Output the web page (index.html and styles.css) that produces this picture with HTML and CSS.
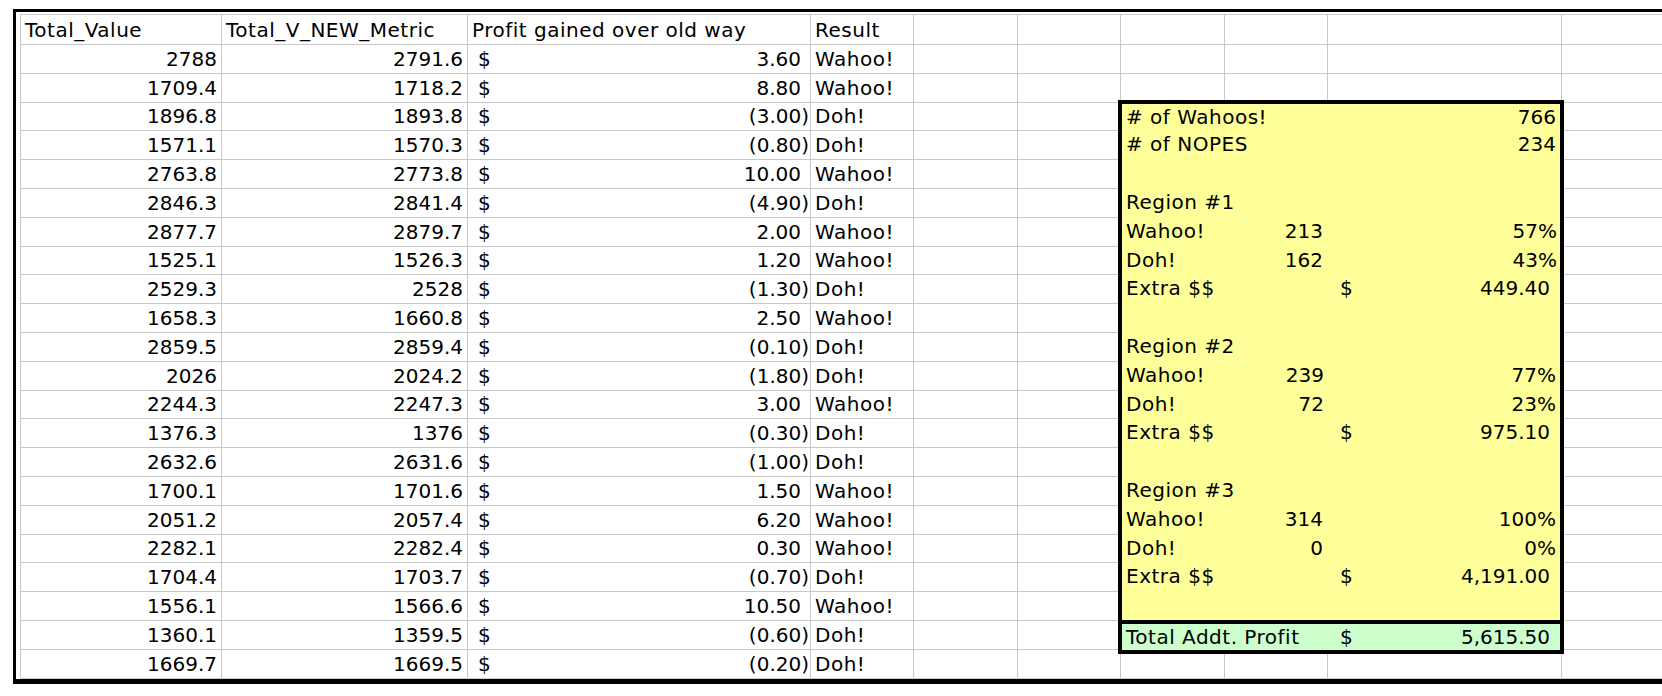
FILE: index.html
```html
<!DOCTYPE html>
<html lang="en">
<head>
<meta charset="utf-8">
<title>Wahoo sheet</title>
<link rel="stylesheet" href="styles.css">
</head>
<body>
<div class="frame">
  <div class="sheet">
    <div class="c">Total_Value</div><div class="c">Total_V_NEW_Metric</div><div class="c">Profit gained over old way</div><div class="c">Result</div><div class="c"></div><div class="c"></div><div class="c"></div><div class="c"></div><div class="c"></div><div class="c"></div>

    <div class="c n">2788</div><div class="c n">2791.6</div><div class="c acc"><span>$</span><span>3.60</span></div><div class="c">Wahoo!</div><div class="c"></div><div class="c"></div><div class="c"></div><div class="c"></div><div class="c"></div><div class="c"></div>
    <div class="c n">1709.4</div><div class="c n">1718.2</div><div class="c acc"><span>$</span><span>8.80</span></div><div class="c">Wahoo!</div><div class="c"></div><div class="c"></div><div class="c"></div><div class="c"></div><div class="c"></div><div class="c"></div>

    <div class="c n">1896.8</div><div class="c n">1893.8</div><div class="c acc neg"><span>$</span><span>(3.00)</span></div><div class="c">Doh!</div><div class="c"></div><div class="c"></div><div class="c"></div>
    <div class="c n">1571.1</div><div class="c n">1570.3</div><div class="c acc neg"><span>$</span><span>(0.80)</span></div><div class="c">Doh!</div><div class="c"></div><div class="c"></div><div class="c"></div>
    <div class="c n">2763.8</div><div class="c n">2773.8</div><div class="c acc"><span>$</span><span>10.00</span></div><div class="c">Wahoo!</div><div class="c"></div><div class="c"></div><div class="c"></div>
    <div class="c n">2846.3</div><div class="c n">2841.4</div><div class="c acc neg"><span>$</span><span>(4.90)</span></div><div class="c">Doh!</div><div class="c"></div><div class="c"></div><div class="c"></div>
    <div class="c n">2877.7</div><div class="c n">2879.7</div><div class="c acc"><span>$</span><span>2.00</span></div><div class="c">Wahoo!</div><div class="c"></div><div class="c"></div><div class="c"></div>
    <div class="c n">1525.1</div><div class="c n">1526.3</div><div class="c acc"><span>$</span><span>1.20</span></div><div class="c">Wahoo!</div><div class="c"></div><div class="c"></div><div class="c"></div>
    <div class="c n">2529.3</div><div class="c n">2528</div><div class="c acc neg"><span>$</span><span>(1.30)</span></div><div class="c">Doh!</div><div class="c"></div><div class="c"></div><div class="c"></div>
    <div class="c n">1658.3</div><div class="c n">1660.8</div><div class="c acc"><span>$</span><span>2.50</span></div><div class="c">Wahoo!</div><div class="c"></div><div class="c"></div><div class="c"></div>
    <div class="c n">2859.5</div><div class="c n">2859.4</div><div class="c acc neg"><span>$</span><span>(0.10)</span></div><div class="c">Doh!</div><div class="c"></div><div class="c"></div><div class="c"></div>
    <div class="c n">2026</div><div class="c n">2024.2</div><div class="c acc neg"><span>$</span><span>(1.80)</span></div><div class="c">Doh!</div><div class="c"></div><div class="c"></div><div class="c"></div>
    <div class="c n">2244.3</div><div class="c n">2247.3</div><div class="c acc"><span>$</span><span>3.00</span></div><div class="c">Wahoo!</div><div class="c"></div><div class="c"></div><div class="c"></div>
    <div class="c n">1376.3</div><div class="c n">1376</div><div class="c acc neg"><span>$</span><span>(0.30)</span></div><div class="c">Doh!</div><div class="c"></div><div class="c"></div><div class="c"></div>
    <div class="c n">2632.6</div><div class="c n">2631.6</div><div class="c acc neg"><span>$</span><span>(1.00)</span></div><div class="c">Doh!</div><div class="c"></div><div class="c"></div><div class="c"></div>
    <div class="c n">1700.1</div><div class="c n">1701.6</div><div class="c acc"><span>$</span><span>1.50</span></div><div class="c">Wahoo!</div><div class="c"></div><div class="c"></div><div class="c"></div>
    <div class="c n">2051.2</div><div class="c n">2057.4</div><div class="c acc"><span>$</span><span>6.20</span></div><div class="c">Wahoo!</div><div class="c"></div><div class="c"></div><div class="c"></div>
    <div class="c n">2282.1</div><div class="c n">2282.4</div><div class="c acc"><span>$</span><span>0.30</span></div><div class="c">Wahoo!</div><div class="c"></div><div class="c"></div><div class="c"></div>
    <div class="c n">1704.4</div><div class="c n">1703.7</div><div class="c acc neg"><span>$</span><span>(0.70)</span></div><div class="c">Doh!</div><div class="c"></div><div class="c"></div><div class="c"></div>
    <div class="c n">1556.1</div><div class="c n">1566.6</div><div class="c acc"><span>$</span><span>10.50</span></div><div class="c">Wahoo!</div><div class="c"></div><div class="c"></div><div class="c"></div>
    <div class="c n">1360.1</div><div class="c n">1359.5</div><div class="c acc neg"><span>$</span><span>(0.60)</span></div><div class="c">Doh!</div><div class="c"></div><div class="c"></div><div class="c"></div>

    <div class="c n">1669.7</div><div class="c n">1669.5</div><div class="c acc neg"><span>$</span><span>(0.20)</span></div><div class="c">Doh!</div><div class="c"></div><div class="c"></div><div class="c"></div><div class="c"></div><div class="c"></div><div class="c"></div>

    <div class="box">
      <div class="yellow">
        <div class="b span2">#&nbsp;of Wahoos!</div><div class="b r">766</div>
        <div class="b span2">#&nbsp;of NOPES</div><div class="b r">234</div>
        <div class="b full"></div>
        <div class="b full">Region #1</div>
        <div class="b">Wahoo!</div><div class="b r">213</div><div class="b r">57%</div>
        <div class="b">Doh!</div><div class="b r">162</div><div class="b r">43%</div>
        <div class="b span2">Extra $$</div><div class="b acc"><span>$</span><span>449.40</span></div>
        <div class="b full"></div>
        <div class="b full">Region #2</div>
        <div class="b">Wahoo!</div><div class="b r">239</div><div class="b r">77%</div>
        <div class="b">Doh!</div><div class="b r">72</div><div class="b r">23%</div>
        <div class="b span2">Extra $$</div><div class="b acc"><span>$</span><span>975.10</span></div>
        <div class="b full"></div>
        <div class="b full">Region #3</div>
        <div class="b">Wahoo!</div><div class="b r">314</div><div class="b r">100%</div>
        <div class="b">Doh!</div><div class="b r">0</div><div class="b r">0%</div>
        <div class="b span2">Extra $$</div><div class="b acc"><span>$</span><span>4,191.00</span></div>
        <div class="b full"></div>
      </div>
      <div class="green">
        <div class="b span2">Total Addt. Profit</div><div class="b acc"><span>$</span><span>5,615.50</span></div>
      </div>
    </div>
  </div>
</div>
</body>
</html>
```
FILE: styles.css
```css
html, body {
  margin: 0;
  padding: 0;
  overflow: hidden;
  background: #ffffff;
}

body {
  font-family: "DejaVu Sans", "Liberation Sans", sans-serif;
  font-size: 20px;
  color: #000000;
}

.frame {
  margin: 9px 0 0 13px;
  border-top: 3px solid #000;
  border-left: 3px solid #000;
  border-bottom: 5px solid #000;
  padding: 2px 0 0 4px;
  width: max-content;
}

.sheet {
  display: grid;
  grid-template-columns: 201px 246px 343px 103px 104px 103px 104px 103px 234px 104px;
  grid-template-rows: 30px repeat(22, 28.8px);
  border-top: 1px solid #c8c8c8;
  border-left: 1px solid #c8c8c8;
}

.c {
  box-sizing: border-box;
  border-right: 1px solid #c8c8c8;
  border-bottom: 1px solid #c8c8c8;
  display: flex;
  align-items: center;
  padding: 0 4px;
  white-space: nowrap;
  min-width: 0;
  letter-spacing: 0.5px;
}

.c.n {
  justify-content: flex-end;
  letter-spacing: 0;
}

.c.acc {
  justify-content: space-between;
  padding-left: 10px;
  padding-right: 9px;
  letter-spacing: 0;
}

.c.acc.neg {
  padding-right: 1px;
}

.box {
  grid-column: 7 / 10;
  grid-row: 4 / 23;
  align-self: start;
  margin: -3px -2px 0 -3px;
  border: 4px solid #000;
  background: #ffff99;
  z-index: 1;
  display: flex;
  flex-direction: column;
}

.yellow {
  display: grid;
  grid-template-columns: 102px 103px 1fr;
  grid-template-rows: 26.4px repeat(17, 28.8px);
}

.green {
  display: grid;
  grid-template-columns: 102px 103px 1fr;
  height: 26px;
  border-top: 4px solid #000;
  background: #ccffcc;
}

.b {
  display: flex;
  align-items: center;
  white-space: nowrap;
  padding: 0 4px;
  min-width: 0;
  letter-spacing: 0.5px;
}

.b.r {
  justify-content: flex-end;
  letter-spacing: 0;
}

.yellow > .b.r:nth-child(3n) {
  padding-right: 3px;
}

.span2 {
  grid-column: 1 / 3;
}

.full {
  grid-column: 1 / -1;
}

.b.acc {
  justify-content: space-between;
  padding-left: 13px;
  padding-right: 10px;
  letter-spacing: 0;
}
```
